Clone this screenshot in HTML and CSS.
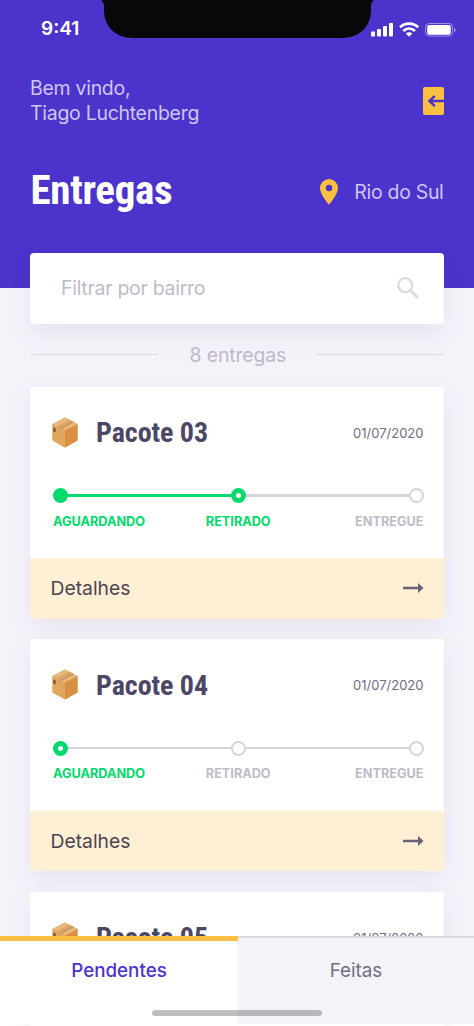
FILE: index.html
```html
<!DOCTYPE html>
<html lang="pt-BR">
<head>
<meta charset="utf-8">
<title>Entregas</title>
<link rel="stylesheet" href="styles.css">
</head>
<body>
<svg class="defs" aria-hidden="true">
  <symbol id="box" viewBox="0 0 26 31">
    <path d="M13 .5 25.5 7v16.500L13 30.500.5 23.500V7z" fill="#e0a458"/>
    <path d="M.5 7 13 13.500v17L.5 23.500z" fill="#e2a75f"/>
    <path d="M13 13.500 25.500 7v16.500L13 30.500z" fill="#d98f42"/>
    <path d="M.5 7 13 .5 25.500 7 13 13.500z" fill="#e7b87c"/>
    <path d="m5 9.300 12.500-6.500 4 2L9 11.500v3.700l-2-1.500-2 .3z" fill="#d8a468"/>
    <path d="m9 11.500 12.500-6.700" stroke="#b87e42" stroke-width=".8"/>
    <path d="M1.500 10.500 3.500 11.500v4l-2-1z" fill="#69452d"/>
  </symbol>
  <symbol id="arrow" viewBox="0 0 21 10">
    <path d="M0 3.800h15V0l5.500 5-5.500 5V6.200H0z" fill="#6c6076"/>
  </symbol>
</svg>
<div class="screen">
  <header class="header">
    <div class="status">
      <span class="clock">9:41</span>
      <svg class="notch" viewBox="0 0 273 38"><path d="M0 0h273q-3 2-3 7v3c0 17-12 28-29 28H32C15 38 3 27 3 10V7q0-5-3-7z" fill="#08080a"/></svg>
      <svg class="indicators" viewBox="0 0 86 16" fill="#fff">
        <rect x="0" y="9.500" width="4" height="5" rx="1"/><rect x="6" y="7" width="4" height="7.500" rx="1"/><rect x="12" y="4" width="4" height="10.500" rx="1"/><rect x="18" y="1" width="4" height="13.500" rx="1"/>
        <g fill="none" stroke="#fff" stroke-width="2.700"><path d="M29 5.200c5.200-4.700 13-4.700 18.200 0"/><path d="M32.200 9c3.500-3.100 8.300-3.100 11.800 0"/></g>
        <path d="M34.900 11.500c1.900-1.600 4.500-1.600 6.400 0l-3.200 3.200z"/>
        <rect x="54.600" y="1.500" width="27" height="12.600" rx="3.500" fill="none" stroke="#fff" stroke-opacity=".45"/>
        <rect x="56.200" y="3" width="23.600" height="9.700" rx="2"/>
        <path d="M83 5.700c2 .7 2 3.700 0 4.500z" opacity=".5"/>
      </svg>
    </div>
    <div class="greeting">
      <p class="welcome">Bem vindo,<br>Tiago Luchtenberg</p>
      <svg class="logout" viewBox="0 0 21 28"><rect width="21" height="28" rx="2" fill="#ffc042"/><path d="M21 14H7M11.800 8.800 6.500 14l5.300 5.200" fill="none" stroke="#4c33cc" stroke-width="2.500"/></svg>
    </div>
    <div class="heading">
      <h1 class="title">Entregas</h1>
      <div class="place">
        <svg class="pin" viewBox="0 0 18 26"><path fill-rule="evenodd" d="M9 0a9 9 0 0 0-9 9c0 6.500 9 16.800 9 16.800S18 15.500 18 9a9 9 0 0 0-9-9zm0 12.200a3.200 3.200 0 1 1 0-6.400 3.200 3.200 0 0 1 0 6.400z" fill="#ffc042"/></svg>
        <span class="city">Rio do Sul</span>
      </div>
    </div>
  </header>
  <main class="content">
    <div class="search">
      <span class="placeholder">Filtrar por bairro</span>
      <svg class="lens" viewBox="0 0 22 22" fill="none" stroke="#dadae0" stroke-width="2.300"><circle cx="8.200" cy="8.200" r="7"/><path d="m13.200 13.200 7.800 7.800" stroke-width="2.800"/></svg>
    </div>
    <div class="count"><span class="rule"></span><span class="total">8 entregas</span><span class="rule"></span></div>
    <div class="cards">
      <article class="card">
        <div class="card-head"><svg class="box"><use href="#box"/></svg><h2 class="name">Pacote 03</h2><time class="date">01/07/2020</time></div>
        <div class="track"><i class="dot full"></i><i class="line on"></i><i class="dot current"></i><i class="line"></i><i class="dot"></i></div>
        <div class="steps"><span class="step on">AGUARDANDO</span><span class="step on">RETIRADO</span><span class="step">ENTREGUE</span></div>
        <div class="details"><span>Detalhes</span><svg class="arrow"><use href="#arrow"/></svg></div>
      </article>
      <article class="card">
        <div class="card-head"><svg class="box"><use href="#box"/></svg><h2 class="name">Pacote 04</h2><time class="date">01/07/2020</time></div>
        <div class="track"><i class="dot current"></i><i class="line"></i><i class="dot"></i><i class="line"></i><i class="dot"></i></div>
        <div class="steps"><span class="step on">AGUARDANDO</span><span class="step">RETIRADO</span><span class="step">ENTREGUE</span></div>
        <div class="details"><span>Detalhes</span><svg class="arrow"><use href="#arrow"/></svg></div>
      </article>
      <article class="card">
        <div class="card-head"><svg class="box"><use href="#box"/></svg><h2 class="name">Pacote 05</h2><time class="date">01/07/2020</time></div>
      </article>
    </div>
  </main>
  <nav class="tabs">
    <div class="tab active">Pendentes</div>
    <div class="tab">Feitas</div>
    <span class="home"></span>
  </nav>
</div>
</body>
</html>
```

FILE: styles.css
```css
* { box-sizing: border-box; }
body { margin: 0; background: #fff; font-family: Inter, "Liberation Sans", sans-serif; }
h1, h2, p { margin: 0; }
svg { display: block; flex: none; }
.defs { position: absolute; width: 0; height: 0; }

.screen { display: flex; flex-direction: column; width: 474px; height: 1026px; padding-bottom: 2px; overflow: hidden; }

.header { flex: none; height: 288px; background: #4c33cc; color: #cfc6f2; }
.status { display: flex; height: 76px; }
.clock { width: 60px; margin-left: 41px; padding-top: 17px; font-size: 19px; line-height: 24px; font-weight: 600; color: #fff; }
.notch { width: 273px; height: 38px; }
.indicators { width: 86px; height: 16px; margin: 21.500px 16px 0 -3px; }
.greeting { display: flex; justify-content: space-between; align-items: center; height: 50px; padding: 0 30px; }
.welcome { font-size: 19.500px; line-height: 25px; letter-spacing: -.29px; }
.logout { width: 21px; height: 28px; }
.heading { display: flex; justify-content: space-between; align-items: center; height: 50px; margin-top: 39px; padding: 0 30.500px; }
.title { font-family: "Roboto Condensed", Roboto, sans-serif; font-stretch: 75%; font-size: 41px; line-height: 50px; font-weight: 700; letter-spacing: -.3px; color: #fff; }
.place { display: flex; align-items: center; gap: 16.500px; padding-top: 4px; }
.pin { width: 18px; height: 26px; }
.city { font-size: 19.500px; line-height: 26px; letter-spacing: -.32px; }

.content { flex: 1; min-height: 0; padding: 0 30.500px 0 30px; background: #f5f3fa; }
.search { position: relative; display: flex; justify-content: space-between; align-items: center; height: 71px; margin-top: -35.500px; padding: 0 25px 0 31px; border-radius: 4px; background: #fff; box-shadow: 0 10px 25px rgba(60, 45, 100, .08); }
.placeholder { font-size: 19.500px; letter-spacing: -.29px; color: #bebcc8; }
.lens { width: 22px; height: 22px; }
.count { position: relative; display: flex; align-items: center; gap: 30px; height: 26px; margin: 18px 0 19px; }
.rule { width: 127.500px; height: 1px; background: #dfdce6; }
.total { flex: 1; font-size: 19.500px; line-height: 26px; letter-spacing: -.2px; text-align: right; white-space: nowrap; color: #beb9cb; }

.cards { display: flex; flex-direction: column; gap: 20.700px; }
.card { flex: none; height: 232px; overflow: hidden; border-radius: 4px; background: #fff; box-shadow: 0 8px 25px rgba(60, 45, 100, .08); }
.card-head { display: flex; align-items: center; height: 91px; padding: 0 20px 0 22px; }
.box { width: 26px; height: 31px; }
.name { margin-left: 18px; padding-top: 2px; font-family: "Roboto Condensed", Roboto, sans-serif; font-stretch: 75%; font-size: 28px; line-height: 34px; font-weight: 700; letter-spacing: -.05px; color: #4c4766; }
.date { margin-left: auto; padding-top: 1px; font-size: 13px; color: #6f6c80; }
.track { display: flex; align-items: center; height: 16px; margin-top: 10px; padding: 0 20px 0 23px; }
.dot { flex: none; width: 15px; height: 15px; border: 2.400px solid #d5d4da; border-radius: 50%; }
.dot.full { border: 0; background: #00d96b; }
.dot.current { border: 5px solid #00d96b; }
.line { flex: 1; height: 2.600px; background: #d5d4da; }
.line.on { background: #00d96b; }
.steps { display: grid; grid-template-columns: 1fr auto 1fr; height: 54.500px; padding: 9px 20px 0 23px; }
.step { font-size: 12.700px; line-height: 18px; font-weight: 700; color: #bebcc8; }
.step:last-child { text-align: right; }
.step.on { color: #00d96b; }
.details { display: flex; justify-content: space-between; align-items: center; height: 60.500px; padding: 0 20px 0 20.500px; background: #fff0d5; font-size: 19.300px; color: #4d4353; }
.arrow { width: 21px; height: 10px; }

.tabs { position: relative; display: flex; flex: none; height: 88px; }
.tab { flex: 1; padding-top: 20px; border-top: 2px solid #dbd9e2; background: #f5f3fa; font-size: 18.800px; line-height: 26px; text-align: center; color: #716c83; }
.tab.active { flex: 0 0 238px; padding-top: 17px; border-top: 5px solid #ffbe45; background: #fff; font-weight: 500; color: #4c33cc; }
.home { position: absolute; left: 152px; bottom: 8px; width: 170px; height: 6px; border-radius: 3px; background: rgba(0, 0, 0, .25); }
```
